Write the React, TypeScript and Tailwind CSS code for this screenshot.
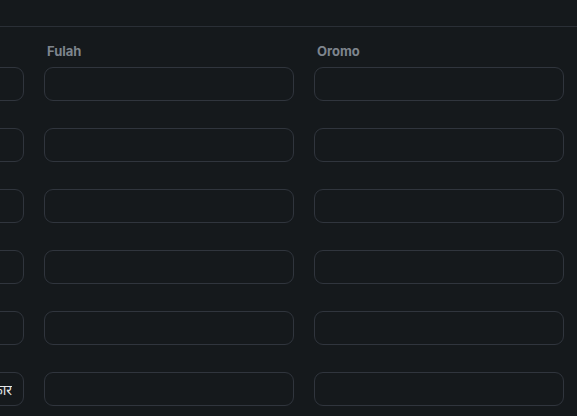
const columns = [
  { label: 'Marathi', values: ['', '', '', '', '', 'सदस्य पुरस्कार'] },
  { label: 'Fulah', values: ['', '', '', '', '', ''] },
  { label: 'Oromo', values: ['', '', '', '', '', ''] },
];

export default function App() {
  return (
    <div
      className="h-[416px] w-[577px] overflow-hidden bg-[#15191c] text-white"
      style={{ fontFamily: 'Inter, "Noto Sans", "Noto Sans Devanagari", sans-serif' }}
    >
      {/* top toolbar strip */}
      <div className="h-[27px] border-b border-[#2a2f36]" />

      {/* translations grid, scrolled horizontally */}
      <div className="ml-[-226px] flex gap-[20px] pt-[16px]">
        {columns.map((col, c) => (
          <div key={col.label} className="flex w-[250px] shrink-0 flex-col">
            <label className="mb-[8px] block h-[16px] pl-[3px] text-[13px] font-bold leading-[16px] text-[#7e858d]">
              {c === 0 ? '' : col.label}
            </label>
            <div className="flex flex-col gap-[27px]">
              {col.values.map((v, i) => (
                <input
                  key={i}
                  defaultValue={v}
                  className={`h-[34px] w-full rounded-[9px] border border-[#30353d] bg-[#15191c] px-[11px] text-[14px] text-[#e6e8ea] outline-none ${v ? 'text-right' : ''}`}
                />
              ))}
            </div>
          </div>
        ))}
      </div>
    </div>
  );
}
